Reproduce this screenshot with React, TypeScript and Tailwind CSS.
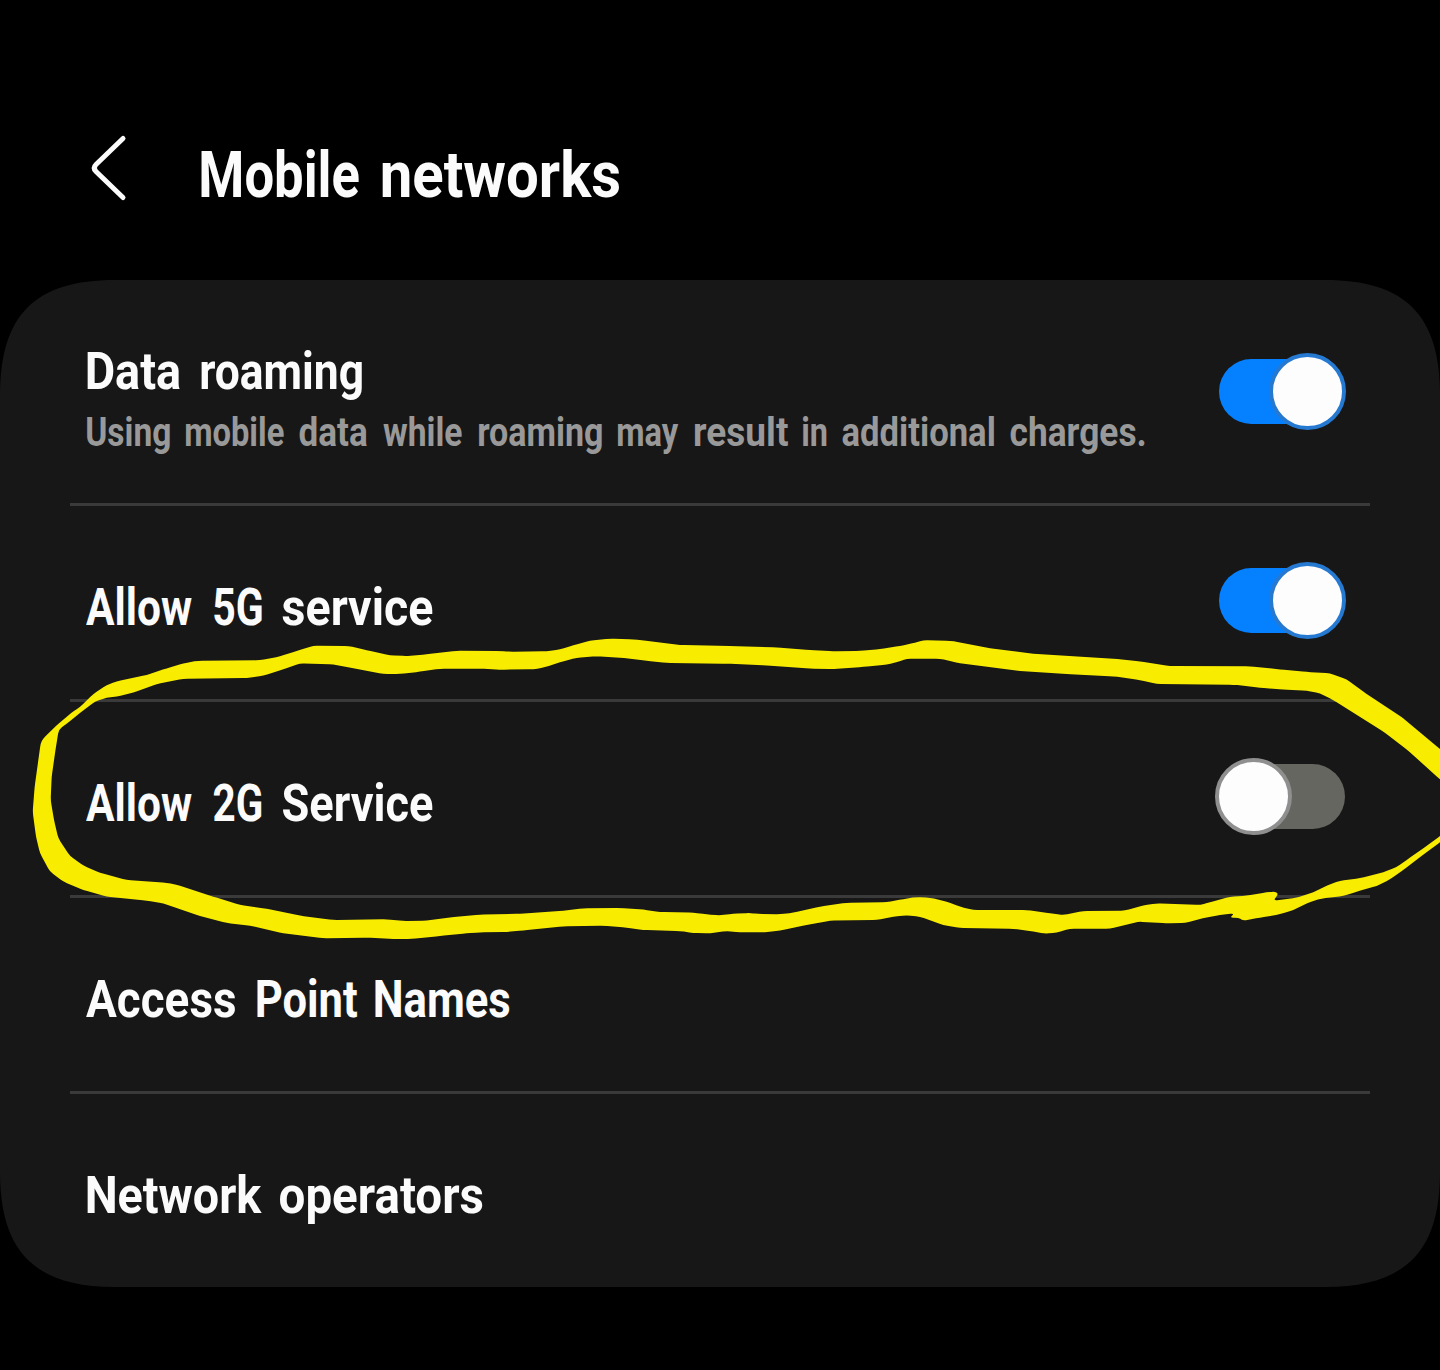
import { useMemo } from "react";

type Word = { text: string; width: number; gap?: number };

/** Ink bounds of a word at the given size, used to condense it to its slot. */
function measure(text: string, size: number) {
  const ctx = document.createElement("canvas").getContext("2d")!;
  ctx.font = `bold ${size}px Roboto`;
  const m = ctx.measureText(text);
  return { left: m.actualBoundingBoxLeft, ink: m.actualBoundingBoxLeft + m.actualBoundingBoxRight };
}

function FitWord({ text, width, gap = 0, size }: Word & { size: number }) {
  const transform = useMemo(() => {
    const { left, ink } = measure(text, size);
    const s = (width - 1) / ink;
    return `translateX(${left * s * 0.5}px) scaleX(${s})`;
  }, [text, width, size]);
  return (
    <span className="block shrink-0 whitespace-nowrap" style={{ width, marginLeft: gap }}>
      <span className="block w-max origin-left" style={{ transform }}>
        {text}
      </span>
    </span>
  );
}

function Words({ words, size }: { words: Word[]; size: number }) {
  return (
    <span className="flex font-bold" style={{ fontSize: size, lineHeight: `${size}px` }}>
      {words.map((w, i) => (
        <FitWord key={i} {...w} size={size} />
      ))}
    </span>
  );
}

function Toggle({ on }: { on: boolean }) {
  return (
    <button
      role="switch"
      aria-checked={on}
      className={
        on
          ? "mr-[95px] flex h-[65px] w-[126px] shrink-0 items-center rounded-full bg-[#0581ff]"
          : "mr-[95px] flex h-[65px] w-[126px] shrink-0 items-center rounded-full bg-[#65665f]"
      }
    >
      <span
        className={
          on
            ? "ml-[50px] size-[77px] shrink-0 rounded-full border-4 border-[#2679d0] bg-[#fdfdfd]"
            : "-ml-1 size-[77px] shrink-0 rounded-full border-4 border-[#8f8f8f] bg-[#fdfdfd]"
        }
      />
    </button>
  );
}

function Divider() {
  return <div className="mx-[70px] h-[3px] shrink-0 bg-[#3a3a3b]" />;
}

function Row({ words, on }: { words: Word[]; on?: boolean }) {
  return (
    <div className="flex h-[193px] items-center justify-between pb-1 pl-[86px]">
      <div className="pt-[14px]">
        <Words words={words} size={52} />
      </div>
      {on !== undefined && <Toggle on={on} />}
    </div>
  );
}

const OUTER: number[][] = [
  [168,318],[213,279],[240,261],[280,222],[320,195],[350,184],[440,165],[500,145],[550,130],[595,122],[780,121],[840,109],[890,93],[940,77],[1045,78],[1100,90],[1170,106],[1220,108],[1280,103],[1370,92],[1500,93],[1530,95],[1640,94],[1680,88],[1720,76],[1770,62],[1830,56],[1900,58],[1950,64],[2040,75],[2200,78],[2330,82],[2430,90],[2500,94],[2580,93],[2640,87],[2700,78],[2745,68],[2770,61],[2850,62],[2880,67],[2970,85],[3100,101],[3340,116],[3420,124],[3510,138],[3750,139],[3840,148],[3920,156],[3990,160],[4040,178],[4090,215],[4210,295],[4320,387],[4500,530],
  [4320,667],[4275,700],[4210,750],[4170,778],[4130,798],[4070,815],[4030,828],[3965,835],[3920,850],[3880,870],[3840,883],[3780,893],[3730,902],[3715,893],[3690,893],[3703,880],[3660,885],[3620,892],[3555,909],[3500,910],[3415,905],[3330,926],[3210,926],[3170,938],[3135,941],[3100,935],[3040,926],[2880,924],[2830,915],[2760,890],[2720,886],[2680,890],[2630,900],[2490,902],[2420,915],[2340,932],[2290,937],[2220,937],[2180,933],[2130,940],[2080,939],[2040,933],[1930,930],[1880,923],[1810,917],[1690,919],[1570,931],[1520,936],[1440,937],[1400,940],[1320,948],[1235,957],[1180,957],[1100,953],[970,955],[850,940],[750,917],[680,909],[600,888],[490,850],[440,842],[320,830],[250,810],[190,785],[150,755],[120,700],[108,650],[98,575],[104,500],[115,420],[122,370],[130,355],
];

const INNER: number[][] = [
  [176,329],[200,311],[240,279],[285,245],[320,233],[350,230],[400,218],[470,192],[550,176],[740,174],[790,167],[850,148],[900,130],[1000,133],[1060,145],[1150,162],[1200,162],[1260,155],[1320,146],[1440,146],[1500,149],[1600,148],[1635,142],[1680,127],[1730,113],[1790,109],[1860,113],[1940,122],[2000,129],[2180,131],[2300,136],[2430,146],[2500,147],[2590,141],[2660,134],[2700,124],[2720,116],[2820,116],[2880,130],[3060,153],[3200,162],[3340,169],[3420,180],[3470,192],[3700,194],[3780,203],[3850,209],[3920,212],[3960,220],[4000,240],[4150,335],[4220,388],[4320,478],[4420,564],
  [4320,648],[4280,678],[4230,713],[4190,741],[4150,757],[4080,775],[4020,782],[3980,797],[3940,817],[3890,833],[3820,842],[3835,822],[3825,815],[3800,817],[3740,827],[3690,830],[3630,847],[3600,855],[3470,850],[3430,856],[3375,872],[3250,873],[3190,885],[3150,880],[3080,870],[2920,870],[2880,860],[2840,845],[2790,833],[2750,831],[2710,837],[2660,847],[2540,848],[2460,860],[2380,878],[2340,883],[2275,882],[2250,879],[2200,881],[2160,886],[2120,883],[2080,878],[1980,876],[1930,869],[1860,864],[1750,865],[1690,872],[1560,881],[1440,884],[1350,892],[1280,902],[1210,903],[1160,898],[1000,900],[900,887],[800,866],[720,855],[640,830],[540,797],[500,788],[380,780],[300,758],[250,737],[210,708],[175,655],[162,600],[152,540],[155,470],[165,400],
];

/** Closed path with lightly rounded corners. */
function outline(pts: number[][]) {
  const n = pts.length;
  const toward = (a: number[], b: number[]) => {
    const d = Math.hypot(b[0] - a[0], b[1] - a[1]);
    const t = Math.min(0.4, 12 / d);
    return `${(a[0] + (b[0] - a[0]) * t).toFixed(1)} ${(a[1] + (b[1] - a[1]) * t).toFixed(1)}`;
  };
  return (
    pts
      .map((p, i) => {
        const prev = pts[(i + n - 1) % n];
        const next = pts[(i + 1) % n];
        return `${i ? "L" : "M"}${toward(p, prev)}Q${p[0]} ${p[1]} ${toward(p, next)}`;
      })
      .join("") + "Z"
  );
}

function MarkerLoop() {
  return (
    <svg
      viewBox="0 0 4320 1020"
      className="pointer-events-none absolute top-[620px] left-0 h-[340px] w-[1440px]"
      aria-hidden="true"
    >
      <path d={outline(OUTER) + outline(INNER)} fill="#f8ed00" fillRule="evenodd" />
    </svg>
  );
}

export default function App() {
  return (
    <div className="relative h-[1370px] w-[1440px] overflow-hidden bg-black font-['Roboto',sans-serif] text-[#fbfbfb]">
      <header className="flex h-[280px] items-start pl-[88px]">
        <button aria-label="Back" className="mt-[132px] mr-[70px]">
          <svg viewBox="0 0 42 72" className="block h-[72px] w-[42px]" fill="none">
            <path
              d="M35 6.5 L8 32.5 Q4.5 36 8 39.5 L35 65.5"
              stroke="#fbfbfb"
              strokeWidth="5"
              strokeLinecap="round"
              strokeLinejoin="round"
            />
          </svg>
        </button>
        <h1 className="mt-[144px]">
          <Words size={64} words={[{ text: "Mobile", width: 158 }, { text: "networks", width: 238, gap: 23 }]} />
        </h1>
      </header>

      <main className="flex h-[1007px] flex-col bg-[#171717] [clip-path:path('M0_115C0_35_35_0_115_0H1325C1405_0_1440_35_1440_115V892C1440_972_1405_1007_1325_1007H115C35_1007_0_972_0_892Z')]">
        <div className="flex h-[223px] items-center justify-between pl-[86px]">
          <div className="flex flex-col gap-[15px] pt-[16px]">
            <Words size={52} words={[{ text: "Data", width: 94 }, { text: "roaming", width: 162, gap: 20 }]} />
            <div className="text-[#999999]">
              <Words
                size={40}
                words={[
                  { text: "Using", width: 84 },
                  { text: "mobile", width: 99, gap: 15 },
                  { text: "data", width: 69, gap: 15 },
                  { text: "while", width: 80, gap: 15 },
                  { text: "roaming", width: 124, gap: 15 },
                  { text: "may", width: 62, gap: 15 },
                  { text: "result", width: 94, gap: 15 },
                  { text: "in", width: 25, gap: 14 },
                  { text: "additional", width: 153, gap: 15 },
                  { text: "charges.", width: 135, gap: 15 },
                ]}
              />
            </div>
          </div>
          <Toggle on={true} />
        </div>
        <Divider />
        <Row
          on={true}
          words={[
            { text: "Allow", width: 107 },
            { text: "5G", width: 49, gap: 20 },
            { text: "service", width: 151, gap: 20 },
          ]}
        />
        <Divider />
        <Row
          on={false}
          words={[
            { text: "Allow", width: 107 },
            { text: "2G", width: 49, gap: 20 },
            { text: "Service", width: 151, gap: 20 },
          ]}
        />
        <Divider />
        <Row
          words={[
            { text: "Access", width: 150 },
            { text: "Point", width: 101, gap: 20 },
            { text: "Names", width: 135, gap: 17 },
          ]}
        />
        <Divider />
        <Row words={[{ text: "Network", width: 176 }, { text: "operators", width: 204, gap: 17 }]} />
      </main>

      <MarkerLoop />
    </div>
  );
}
